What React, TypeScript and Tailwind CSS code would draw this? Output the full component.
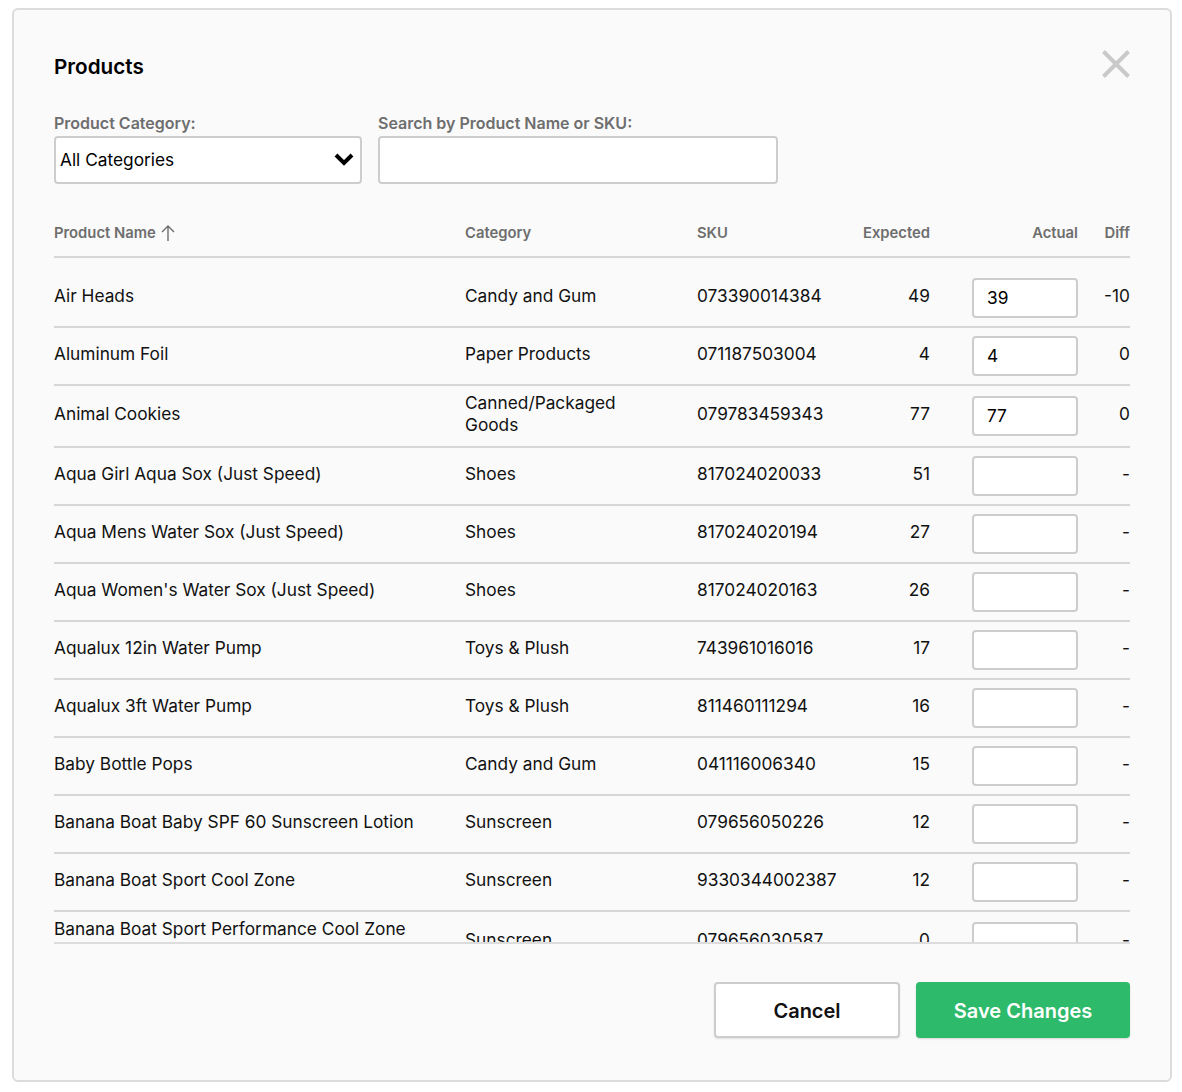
const rows = [
  { name: 'Air Heads', category: 'Candy and Gum', sku: '073390014384', expected: 49, actual: '39', diff: '-10' },
  { name: 'Aluminum Foil', category: 'Paper Products', sku: '071187503004', expected: 4, actual: '4', diff: '0' },
  { name: 'Animal Cookies', category: 'Canned/Packaged Goods', sku: '079783459343', expected: 77, actual: '77', diff: '0' },
  { name: 'Aqua Girl Aqua Sox (Just Speed)', category: 'Shoes', sku: '817024020033', expected: 51, actual: '', diff: '-' },
  { name: 'Aqua Mens Water Sox (Just Speed)', category: 'Shoes', sku: '817024020194', expected: 27, actual: '', diff: '-' },
  { name: "Aqua Women's Water Sox (Just Speed)", category: 'Shoes', sku: '817024020163', expected: 26, actual: '', diff: '-' },
  { name: 'Aqualux 12in Water Pump', category: 'Toys & Plush', sku: '743961016016', expected: 17, actual: '', diff: '-' },
  { name: 'Aqualux 3ft Water Pump', category: 'Toys & Plush', sku: '811460111294', expected: 16, actual: '', diff: '-' },
  { name: 'Baby Bottle Pops', category: 'Candy and Gum', sku: '041116006340', expected: 15, actual: '', diff: '-' },
  { name: 'Banana Boat Baby SPF 60 Sunscreen Lotion', category: 'Sunscreen', sku: '079656050226', expected: 12, actual: '', diff: '-' },
  { name: 'Banana Boat Sport Cool Zone', category: 'Sunscreen', sku: '9330344002387', expected: 12, actual: '', diff: '-' },
  { name: 'Banana Boat Sport Performance Cool Zone Sunscreen Lotion', category: 'Sunscreen', sku: '079656030587', expected: 0, actual: '', diff: '-' },
];

export default function App() {
  return (
    <div className="bg-white min-h-[1092px] pt-2 pl-3 font-['Inter','Liberation_Sans',sans-serif] text-[17.3px] leading-[22px] text-[#111]">
      <div className="w-[1160px] h-[1074px] bg-[#fafafa] border-2 border-[#dcdcdc] rounded-md px-10 pt-10">
        <div className="flex justify-between h-[62px]">
          <h1 className="text-[20.7px] font-semibold leading-[34px] text-black">Products</h1>
          <button className="w-7 h-7 cursor-pointer">
            <svg viewBox="0 0 28 28" className="w-7 h-7 block" fill="none" stroke="#c9c9c9" strokeWidth="4">
              <path d="M1.5 1.5 26.5 26.5M26.5 1.5 1.5 26.5" />
            </svg>
          </button>
        </div>

        <div className="flex gap-4">
          <label className="block w-[308px]">
            <span className="block pb-[2px] text-[16px] leading-[22px] font-semibold text-[#6e6e6e]">Product Category:</span>
            <div className="relative">
              <select className="w-full h-12 appearance-none bg-white border-2 border-[#cdcdcd] rounded pl-1 text-black">
                <option>All Categories</option>
              </select>
              <svg viewBox="0 0 20 13" className="absolute right-[8px] top-[17px] w-5 h-[13px] pointer-events-none" fill="none" stroke="#000" strokeWidth="4">
                <path d="M2 2 10 10 18 2" />
              </svg>
            </div>
          </label>
          <label className="block w-[400px]">
            <span className="block pb-[2px] text-[16px] leading-[22px] font-semibold text-[#6e6e6e]">Search by Product Name or SKU:</span>
            <input className="block w-full h-12 bg-white border-2 border-[#cdcdcd] rounded px-1" />
          </label>
        </div>

        <div className="mt-[35px] h-[725px] overflow-hidden border-b-2 border-[#dcdcdc]">
          <table className="w-[1076px] table-fixed border-collapse">
            <colgroup>
              <col className="w-[411px]" />
              <col className="w-[232px]" />
              <col className="w-[140px]" />
              <col className="w-[93px]" />
              <col className="w-[148px]" />
              <col className="w-[52px]" />
            </colgroup>
            <thead>
              <tr className="border-b-2 border-[#d6d6d6] text-[14.8px] text-[#6e6e6e]">
                <th className="h-[38px] pb-[10px] text-left font-semibold">
                  <span className="inline-flex items-center gap-[5px]">
                    Product Name
                    <svg viewBox="0 0 14 16" className="w-[14px] h-4" fill="none" stroke="#6e6e6e" strokeWidth="1.4">
                      <path d="M7 16V1M1 7l6-6 6 6" />
                    </svg>
                  </span>
                </th>
                <th className="pb-[10px] text-left font-semibold">Category</th>
                <th className="pb-[10px] text-left font-semibold">SKU</th>
                <th className="pb-[10px] text-right font-semibold">Expected</th>
                <th className="pb-[10px] text-right font-semibold">Actual</th>
                <th className="pb-[10px] text-right font-semibold">Diff</th>
              </tr>
            </thead>
            <tbody>
              {rows.map((row, i) => {
                const cell = i === 0 ? 'pt-5 pb-2 align-middle' : 'py-2 align-middle';
                return (
                  <tr key={row.sku} className="border-b-2 border-[#d6d6d6]">
                    <td className={cell + ' pr-4'}><div className="-translate-y-[2px]">{row.name}</div></td>
                    <td className={cell + ' pr-12'}><div className="-translate-y-[2px]">{row.category}</div></td>
                    <td className={cell}><div className="-translate-y-[2px]">{row.sku}</div></td>
                    <td className={cell + ' text-right'}><div className="-translate-y-[2px]">{row.expected}</div></td>
                    <td className={cell + ' text-right'}>
                      <input
                        defaultValue={row.actual}
                        className="inline-block align-middle w-[106px] h-10 pb-[2px] bg-white border-2 border-[#cdcdcd] rounded px-[13px] text-left text-black"
                      />
                    </td>
                    <td className={cell + ' text-right'}><div className="-translate-y-[2px]">{row.diff}</div></td>
                  </tr>
                );
              })}
            </tbody>
          </table>
        </div>

        <div className="flex justify-end gap-4 mt-[38px]">
          <button className="w-[186px] h-14 pt-[2px] bg-white border-2 border-[#cdcdcd] rounded text-[20px] font-semibold text-[#111] cursor-pointer shadow-[0_1px_2px_rgba(0,0,0,0.1)]">
            Cancel
          </button>
          <button className="w-[214px] h-14 pt-[2px] bg-[#2dba6a] rounded text-[20px] font-semibold text-white cursor-pointer shadow-[0_1px_2px_rgba(0,0,0,0.15)]">
            Save Changes
          </button>
        </div>
      </div>
    </div>
  );
}
